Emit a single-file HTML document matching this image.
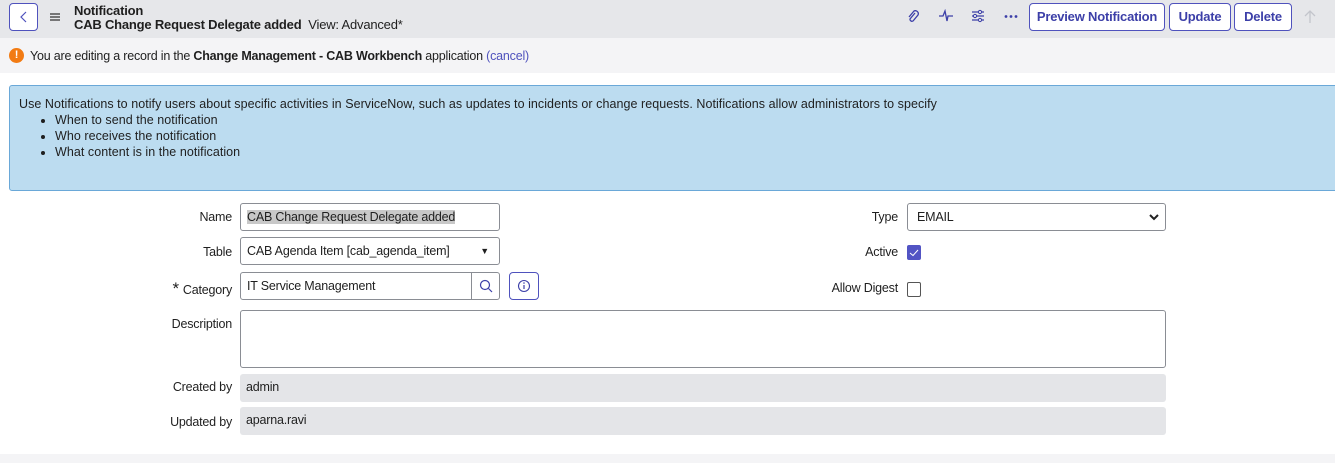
<!DOCTYPE html>
<html><head><style>
*{box-sizing:border-box;margin:0;padding:0}
body{width:1335px;height:463px;overflow:hidden;background:#fff;font-family:"Liberation Sans",sans-serif;font-size:12.5px;color:#1f1f1f;position:relative;letter-spacing:-0.2px}
.a{position:absolute}
.hdr{left:0;top:0;width:1335px;height:38px;background:#e6e7ea}
.btn{position:absolute;top:3px;height:28px;border:1px solid #4f52bd;border-radius:4px;background:#fff;color:#3c3fa8;font-weight:bold;font-size:13px;text-align:center;line-height:26px}
.warn{left:0;top:38px;width:1335px;height:35px;background:#f4f4f6}
.info{left:9px;top:85px;width:1330px;height:106px;background:#bcdcf0;border:1px solid #6aa8d8;border-radius:3px;padding:10px 9px;line-height:16px;letter-spacing:0.05px}
.info ul{margin-left:36px}
.lbl{position:absolute;text-align:right;width:200px}
.inp{position:absolute;border:1px solid #8a8d94;border-radius:3px;background:#fff;padding-left:6px;line-height:26px;height:28px}
.ro{position:absolute;background:#e4e5e8;border-radius:3px;padding-left:6px;line-height:27px;height:28px}
</style></head><body>
<div class="a hdr"></div>
<div class="a" style="left:9px;top:3px;width:29px;height:28px;border:1px solid #4f52bd;border-radius:4px;background:#fff"><svg width="27" height="26"><path d="M16 8 L11 13 L16 18" stroke="#4f52bd" fill="none" stroke-width="1.2"/></svg></div>
<svg class="a" style="left:49px;top:12px" width="12" height="10"><path d="M1 2H11M1 5H11M1 8H11" stroke="#333" stroke-width="1.3"/></svg>
<div class="a" style="left:74px;top:3px;font-weight:bold;font-size:13px">Notification</div>
<div class="a" style="left:74px;top:17px;font-size:13px"><b>CAB Change Request Delegate added</b>&nbsp; View: Advanced*</div>
<svg class="a" style="left:906px;top:10px" width="14" height="14"><path d="M9 3 L4 9 A2 2 0 0 0 7 11 L12 5 A3 3 0 0 0 8 1 L3 7" stroke="#3c3fa8" fill="none" stroke-width="1.3"/></svg>
<svg class="a" style="left:938px;top:9px" width="16" height="14"><path d="M1 7H5L7 2L9 12L10 7H15" stroke="#3c3fa8" fill="none" stroke-width="1.3"/></svg>
<svg class="a" style="left:971px;top:9px" width="14" height="14"><path d="M1 3H13M1 7H13M1 11H13" stroke="#3c3fa8" stroke-width="1.2"/><circle cx="9" cy="3" r="1.6" fill="#e6e7ea" stroke="#3c3fa8"/><circle cx="4" cy="7" r="1.6" fill="#e6e7ea" stroke="#3c3fa8"/><circle cx="9" cy="11" r="1.6" fill="#e6e7ea" stroke="#3c3fa8"/></svg>
<svg class="a" style="left:1004px;top:14px" width="14" height="5"><circle cx="2" cy="2.5" r="1.4" fill="#3c3fa8"/><circle cx="7" cy="2.5" r="1.4" fill="#3c3fa8"/><circle cx="12" cy="2.5" r="1.4" fill="#3c3fa8"/></svg>
<div class="btn" style="left:1029px;width:136px">Preview Notification</div>
<div class="btn" style="left:1169px;width:62px">Update</div>
<div class="btn" style="left:1234px;width:58px">Delete</div>
<svg class="a" style="left:1303px;top:9px" width="14" height="15"><path d="M7 14V2M2 7L7 2L12 7" stroke="#c3c5cc" fill="none" stroke-width="1.3"/></svg>
<div class="a warn"></div>
<div class="a" style="left:9px;top:48px;width:15px;height:15px;border-radius:50%;background:#f27b13;color:#fff;font-weight:bold;font-size:11px;text-align:center;line-height:15px">!</div>
<div class="a" style="left:30px;top:49px">You are editing a record in the <b>Change Management - CAB Workbench</b> application <span style="color:#4f52bd">(cancel)</span></div>
<div class="a info">Use Notifications to notify users about specific activities in ServiceNow, such as updates to incidents or change requests. Notifications allow administrators to specify<ul><li>When to send the notification</li><li>Who receives the notification</li><li>What content is in the notification</li></ul></div>
<div class="lbl" style="left:32px;top:210px">Name</div>
<div class="inp" style="left:240px;top:203px;width:260px"><span style="background:#c8c8c8">CAB Change Request Delegate added</span></div>
<div class="lbl" style="left:32px;top:245px">Table</div>
<div class="inp" style="left:240px;top:237px;width:260px">CAB Agenda Item [cab_agenda_item]<span style="position:absolute;right:10px;top:0;font-size:9px">▼</span></div>
<div class="lbl" style="left:32px;top:279px"><span style="font-size:17px;margin-right:4px;font-weight:300">*</span>Category</div>
<div class="inp" style="left:240px;top:272px;width:260px">IT Service Management<div style="position:absolute;left:230px;top:0;width:28px;height:26px;border-left:1px solid #8a8d94"><svg width="28" height="26"><circle cx="13" cy="12" r="4.5" stroke="#3c3fa8" fill="none" stroke-width="1.2"/><path d="M16.5 15.5L20 19" stroke="#3c3fa8" stroke-width="1.2"/></svg></div></div>
<div class="a" style="left:509px;top:272px;width:30px;height:28px;border:1px solid #4f52bd;border-radius:4px"><svg width="28" height="26"><circle cx="14" cy="13" r="5.5" stroke="#3c3fa8" fill="none" stroke-width="1.1"/><path d="M14 12V16" stroke="#3c3fa8" stroke-width="1.2"/><circle cx="14" cy="10" r=".8" fill="#3c3fa8"/></svg></div>
<div class="lbl" style="left:32px;top:317px">Description</div>
<div class="inp" style="left:240px;top:310px;width:926px;height:58px"></div>
<div class="lbl" style="left:32px;top:380px">Created by</div>
<div class="ro" style="left:240px;top:374px;width:926px">admin</div>
<div class="lbl" style="left:32px;top:415px">Updated by</div>
<div class="ro" style="left:240px;top:407px;width:926px">aparna.ravi</div>
<div class="lbl" style="left:698px;top:210px">Type</div>
<div class="inp" style="left:907px;top:203px;width:259px;padding-left:9px">EMAIL<svg style="position:absolute;right:6px;top:9px" width="10" height="8"><path d="M1 2L5 6L9 2" stroke="#222" fill="none" stroke-width="2"/></svg></div>
<div class="lbl" style="left:698px;top:245px">Active</div>
<div class="a" style="left:907px;top:245px;width:14px;height:15px;background:#5254c4;border-radius:2px"><svg width="14" height="15"><path d="M3 8L6 10.5L11 5" stroke="#fff" fill="none" stroke-width="1"/></svg></div>
<div class="lbl" style="left:698px;top:281px">Allow Digest</div>
<div class="a" style="left:907px;top:282px;width:14px;height:15px;border:1px solid #555;border-radius:2px"></div>
<div class="a" style="left:0;top:454px;width:1335px;height:9px;background:#f4f4f6"></div>
</body></html>
